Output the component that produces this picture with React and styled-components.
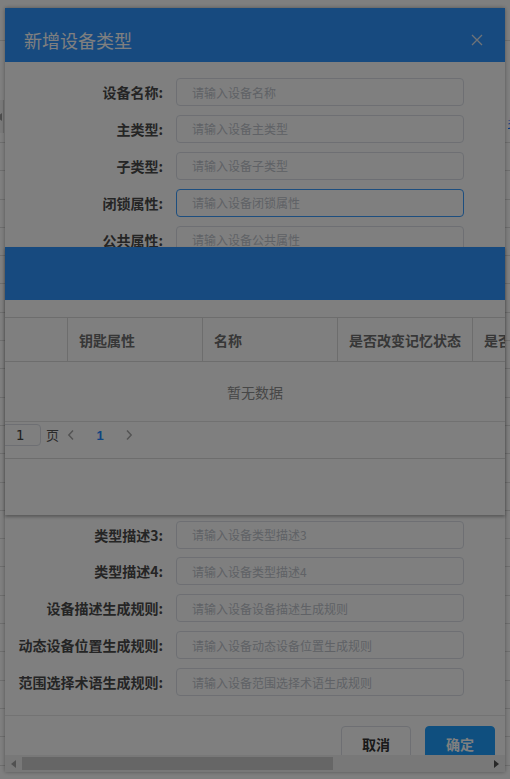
import React from 'react';
import styled, { createGlobalStyle } from 'styled-components';

const GlobalStyle = createGlobalStyle`
  html, body {
    margin: 0;
    padding: 0;
    width: 100%;
    height: 100%;
    overflow: hidden;
    background: #fff;
  }
  body {
    font-family: "Noto Sans CJK SC", "Noto Sans", sans-serif;
  }
  * { box-sizing: border-box; }
`;

const BLUE = '#2e94ff';

const Page = styled.div`
  position: relative;
  width: 510px;
  height: 779px;
  overflow: hidden;
  background: #fff;
`;

/* ---------- list page underneath ---------- */
const Backdrop = styled.div`
  position: absolute;
  inset: 0;
  display: flex;
  flex-direction: column;
`;

const TopBar = styled.div`
  flex: none;
  height: 41px;
  border-bottom: 1px solid #dedede;
`;

const Toolbar = styled.div`
  flex: none;
  height: 101px;
  padding-top: 59px;
  display: flex;
  align-items: flex-start;
  justify-content: space-between;
`;

const ScrollBtn = styled.div`
  width: 14px;
  height: 33px;
  margin-left: -10px;
  background: #f4f4f4;
  border-right: 1px solid #d8d8d8;
  display: flex;
  align-items: center;
  justify-content: flex-end;
  padding-right: 1px;
  color: #999;
`;

const OpLink = styled.span`
  margin-top: 15px;
  margin-right: -22px;
  font-size: 12px;
  color: #1677ff;
  text-decoration: underline;
  font-family: "Liberation Sans", sans-serif;
`;

const BgRow = styled.div`
  flex: none;
  height: 28.3px;
  border-top: 1px solid #dedede;
`;

/* ---------- main dialog ---------- */
const Modal = styled.div`
  position: absolute;
  left: 5px;
  top: 8px;
  width: 500px;
  height: 764px;
  z-index: 1;
  background: #fff;
  display: flex;
  flex-direction: column;
  overflow: hidden;
  box-shadow: 0 0 4px rgba(0, 0, 0, 0.35);
`;

const Header = styled.div`
  flex: none;
  height: 54px;
  background: ${BLUE};
  display: flex;
  align-items: center;
  justify-content: space-between;
  padding: 9px 22px 0 19px;
`;

const Title = styled.h2`
  margin: 0;
  font-size: 18px;
  font-weight: 400;
  line-height: 24px;
  color: #fff;
`;

const CloseBtn = styled.button`
  border: 0;
  padding: 0;
  background: transparent;
  width: 12px;
  height: 12px;
  display: flex;
  color: #dfe6ee;
`;

const Content = styled.div`
  flex: 1;
  min-height: 0;
  overflow: hidden;
`;

const Form = styled.div`
  display: grid;
  grid-template-columns: 158px 288px;
  column-gap: 13px;
  row-gap: 8.875px;
  align-items: center;
  padding: 16px 0 19px;
`;

const Label = styled.label`
  text-align: right;
  white-space: nowrap;
  font-size: 14px;
  font-weight: 700;
  color: #4a4a4a;
  line-height: 28px;
`;

const Input = styled.input`
  height: 28px;
  width: 100%;
  padding: 0 15px;
  border: 1px solid ${p => (p.$focused ? '#3a9dff' : '#dcdfe6')};
  border-radius: 4px;
  font-family: "Noto Sans CJK SC", sans-serif;
  font-size: 12px;
  color: #333;
  outline: none;
  background: #fff;
  &::placeholder { color: #c0c4cc; }
`;

const Footer = styled.div`
  border-top: 1px solid #e6e6e6;
  padding: 10px 10px;
  display: flex;
  justify-content: flex-end;
  gap: 14px;
`;

const Button = styled.button`
  width: 70px;
  height: 36px;
  border-radius: 4px;
  font-family: "Noto Sans CJK SC", sans-serif;
  font-size: 14px;
  font-weight: 700;
  border: 1px solid ${p => (p.$primary ? '#1e9fff' : '#dcdfe6')};
  background: ${p => (p.$primary ? '#1e9fff' : '#fff')};
  color: ${p => (p.$primary ? '#fff' : '#333')};
`;

const HScroll = styled.div`
  flex: none;
  height: 17px;
  background: #f1f1f1;
  display: flex;
  align-items: center;
`;

const ScrollArrow = styled.div`
  flex: none;
  width: 17px;
  height: 17px;
  display: flex;
  align-items: center;
  justify-content: center;
  color: ${p => (p.$dark ? '#505050' : '#a3a3a3')};
`;

const ScrollTrack = styled.div`
  flex: 1;
  height: 13px;
  display: flex;
`;

const Thumb = styled.div`
  width: ${p => p.$width}px;
  height: 13px;
  background: #cdcdcd;
`;

/* ---------- stacked key-attribute dialog ---------- */
const SubPanel = styled.div`
  position: absolute;
  left: 5px;
  top: 247px;
  width: 500px;
  height: 268px;
  z-index: 2;
  background: #fff;
  overflow: hidden;
  box-shadow: 0 2px 3px rgba(0, 0, 0, 0.3);
`;

const SubHeader = styled.div`
  height: 53px;
  background: ${BLUE};
`;

const SubBody = styled.div`
  padding-top: 17px;
`;

const Table = styled.div`
  display: grid;
  grid-template-columns: 63px repeat(4, 135px);
  width: max-content;
`;

const HeadCell = styled.div`
  height: 45px;
  padding: 0 11px;
  display: flex;
  align-items: center;
  border-top: 1px solid #dadada;
  border-bottom: 1px solid #dadada;
  border-right: 1px solid #dadada;
  font-size: 14px;
  font-weight: 700;
  color: #6e6e6e;
  white-space: nowrap;
  overflow: hidden;
`;

const EmptyRow = styled.div`
  height: 60px;
  border-bottom: 1px solid #e2e2e2;
  display: flex;
  align-items: center;
  justify-content: center;
  font-size: 14px;
  color: #8e8e8e;
`;

const Pager = styled.div`
  height: 37px;
  border-bottom: 1px solid #dadada;
  display: flex;
  align-items: flex-start;
  padding-top: 2px;
`;

const PageInput = styled.div`
  margin-left: -6px;
  width: 42px;
  height: 22px;
  border: 1px solid #dcdfe6;
  border-radius: 4px;
  display: flex;
  align-items: center;
  justify-content: center;
  font-family: "DejaVu Sans Mono", monospace;
  font-size: 14px;
  color: #444;
`;

const PageText = styled.span`
  margin-left: 5px;
  width: 13px;
  font-size: 13px;
  line-height: 22px;
  color: #555;
`;

const PagerItem = styled.span`
  width: ${p => p.$w}px;
  height: 22px;
  display: flex;
  align-items: center;
  justify-content: center;
  font-family: "Liberation Sans", sans-serif;
  font-size: 13px;
  font-weight: 700;
  color: ${p => (p.$current ? '#1e88ff' : '#a8a8a8')};
`;

const Mask = styled.div`
  position: absolute;
  inset: 0;
  z-index: 3;
  background: rgba(0, 0, 0, 0.5);
`;

const fields = [
  ['设备名称', '请输入设备名称'],
  ['主类型', '请输入设备主类型'],
  ['子类型', '请输入设备子类型'],
  ['闭锁属性', '请输入设备闭锁属性', true],
  ['公共属性', '请输入设备公共属性'],
  ['钥匙属性', '请输入设备钥匙属性'],
  ['所属区域', '请输入设备所属区域'],
  ['默认状态', '请输入设备默认状态'],
  ['图标', '请输入设备图标'],
  ['排序', '请输入设备排序'],
  ['类型描述1', '请输入设备类型描述1'],
  ['类型描述2', '请输入设备类型描述2'],
  ['类型描述3', '请输入设备类型描述3'],
  ['类型描述4', '请输入设备类型描述4'],
  ['设备描述生成规则', '请输入设备设备描述生成规则'],
  ['动态设备位置生成规则', '请输入设备动态设备位置生成规则'],
  ['范围选择术语生成规则', '请输入设备范围选择术语生成规则'],
];

const columns = ['', '钥匙属性', '名称', '是否改变记忆状态', '是否可操作'];

const Chevron = ({ dir }) => (
  <svg width="8" height="12" viewBox="0 0 8 12" fill="none">
    <path
      d={dir === 'left' ? 'M6 1.5 L1.8 6 L6 10.5' : 'M2 1.5 L6.2 6 L2 10.5'}
      stroke="currentColor"
      strokeWidth="1.5"
    />
  </svg>
);

const Tri = ({ dir }) => (
  <svg width="5" height="8" viewBox="0 0 5 8">
    <path d={dir === 'left' ? 'M5 0 L0 4 L5 8 Z' : 'M0 0 L5 4 L0 8 Z'} fill="currentColor" />
  </svg>
);

export default function App() {
  return (
    <>
      <GlobalStyle />
      <Page>
        <Backdrop>
          <TopBar />
          <Toolbar>
            <ScrollBtn>
              <Tri dir="left" />
            </ScrollBtn>
            <OpLink>操作</OpLink>
          </Toolbar>
          {Array.from({ length: 23 }).map((_, i) => (
            <BgRow key={i} />
          ))}
        </Backdrop>

        <Modal>
          <Header>
            <Title>新增设备类型</Title>
            <CloseBtn aria-label="关闭">
              <svg width="12" height="12" viewBox="0 0 12 12">
                <path d="M1 1 L11 11 M11 1 L1 11" stroke="currentColor" strokeWidth="1.3" />
              </svg>
            </CloseBtn>
          </Header>
          <Content>
            <Form>
              {fields.map(([label, ph, focused]) => (
                <React.Fragment key={label}>
                  <Label>{label}:</Label>
                  <Input placeholder={ph} $focused={focused} readOnly />
                </React.Fragment>
              ))}
            </Form>
            <Footer>
              <Button>取消</Button>
              <Button $primary>确定</Button>
            </Footer>
          </Content>
          <HScroll>
            <ScrollArrow>
              <Tri dir="left" />
            </ScrollArrow>
            <ScrollTrack>
              <Thumb $width={311} />
            </ScrollTrack>
            <ScrollArrow $dark>
              <Tri dir="right" />
            </ScrollArrow>
          </HScroll>
        </Modal>

        <SubPanel>
          <SubHeader />
          <SubBody>
            <Table>
              {columns.map((c, i) => (
                <HeadCell key={i}>{c}</HeadCell>
              ))}
            </Table>
            <EmptyRow>暂无数据</EmptyRow>
            <Pager>
              <PageInput>1</PageInput>
              <PageText>页</PageText>
              <PagerItem $w={24}>
                <Chevron dir="left" />
              </PagerItem>
              <PagerItem $w={34} $current>
                1
              </PagerItem>
              <PagerItem $w={24}>
                <Chevron dir="right" />
              </PagerItem>
            </Pager>
          </SubBody>
        </SubPanel>

        <Mask />
      </Page>
    </>
  );
}
